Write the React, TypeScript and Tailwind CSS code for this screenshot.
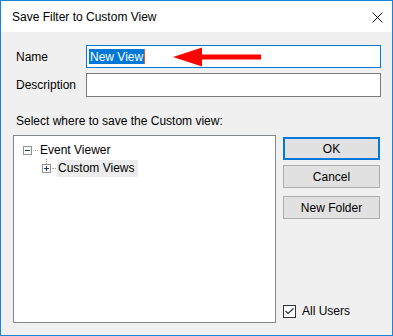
import React from 'react';

// Win10-style "Save Filter to Custom View" dialog

function TreeBox({ sign }: { sign: '+' | '-' }) {
  return (
    <span className="relative flex h-[9px] w-[9px] items-center justify-center border border-[#919191] bg-white">
      <span className="absolute h-px w-[5px] bg-[#1e395b]" />
      {sign === '+' && <span className="absolute h-[5px] w-px bg-[#1e395b]" />}
    </span>
  );
}

function DialogButton({ label, isDefault = false }: { label: string; isDefault?: boolean }) {
  return (
    <button
      className={`flex h-[23px] w-full items-center justify-center bg-[#e1e1e1] text-[12px] text-black ${
        isDefault ? 'border-2 border-[#0078d7]' : 'border border-[#adadad]'
      }`}
    >
      {label}
    </button>
  );
}

export default function App() {
  return (
    <div
      className="relative flex h-[336px] w-[393px] flex-col border border-[#1883d7] bg-[#f0f0f0] text-[12px] text-black"
      style={{ fontFamily: '"Liberation Sans", Arial, sans-serif' }}
    >
      {/* Title bar */}
      <div className="flex h-[31px] shrink-0 items-center justify-between bg-white pl-[11px] pr-[9px]">
        <span className="pt-px">Save Filter to Custom View</span>
        <svg width="11" height="11" viewBox="0 0 11 11" className="mt-px">
          <path d="M0.5 0.5 L10.5 10.5 M10.5 0.5 L0.5 10.5" stroke="#111" strokeWidth="1" />
        </svg>
      </div>

      {/* Body */}
      <div className="flex flex-1 flex-col pl-[12px] pr-[11px] pt-[13px] pb-[12px]">
        <div className="flex items-center">
          <span className="w-[73px] pl-[3px]">Name</span>
          <div className="flex h-[23px] flex-1 items-center border border-[#0078d7] bg-white pl-[2px]">
            <span className="flex h-[15px] items-center bg-[#0078d7] px-px leading-none text-white">New View</span>
            <span className="h-[15px] w-px bg-[#e0602a]" />
          </div>
        </div>
        <div className="mt-[5px] flex items-center">
          <span className="w-[73px] pl-[3px]">Description</span>
          <div className="h-[24px] flex-1 border border-[#7a7a7a] bg-white" />
        </div>

        <div className="mt-[17px] pl-[3px] leading-[14px]">Select where to save the Custom view:</div>

        <div className="mt-[7px] flex flex-1">
          {/* Tree */}
          <div className="w-[263px] border border-[#828790] bg-white pl-[9px] pt-[5px]">
            <div className="flex h-[18px] items-center">
              <TreeBox sign="-" />
              <span className="mx-px w-[5px] border-t border-dotted border-[#a0a0a0]" />
              <span className="pl-[1px]">Event Viewer</span>
            </div>
            <div className="relative flex h-[18px] items-center pl-[19px]">
              <span className="absolute left-[23px] top-0 h-[5px] border-l border-dotted border-[#a0a0a0]" />
              <TreeBox sign="+" />
              <span className="mx-px w-[4px] border-t border-dotted border-[#a0a0a0]" />
              <span className="flex h-[17px] items-center bg-[#ececec] pl-[1px] pr-[4px]">Custom Views</span>
            </div>
          </div>

          {/* Buttons */}
          <div className="ml-[7px] flex w-[97px] flex-col">
            <div className="mt-[2px]">
              <DialogButton label="OK" isDefault />
            </div>
            <div className="mt-[5px]">
              <DialogButton label="Cancel" />
            </div>
            <div className="mt-[8px]">
              <DialogButton label="New Folder" />
            </div>
            <div className="mt-auto mb-[3px] flex items-center">
              <span className="flex h-[13px] w-[13px] items-center justify-center border border-[#333] bg-white">
                <svg width="9" height="7" viewBox="0 0 9 7">
                  <path d="M0.5 3 L3 5.5 L8.5 0.5" fill="none" stroke="#333" strokeWidth="1.2" />
                </svg>
              </span>
              <span className="ml-[6px]">All Users</span>
            </div>
          </div>
        </div>
      </div>

      {/* Red annotation arrow */}
      <svg
        className="absolute left-[171px] top-[45px]"
        width="92"
        height="22"
        viewBox="0 0 92 22"
      >
        <path d="M1 11 L30 1.5 L30 8.5 L89 8.5 L89 13.5 L30 13.5 L30 20.5 Z" fill="#ff0000" />
      </svg>
    </div>
  );
}
